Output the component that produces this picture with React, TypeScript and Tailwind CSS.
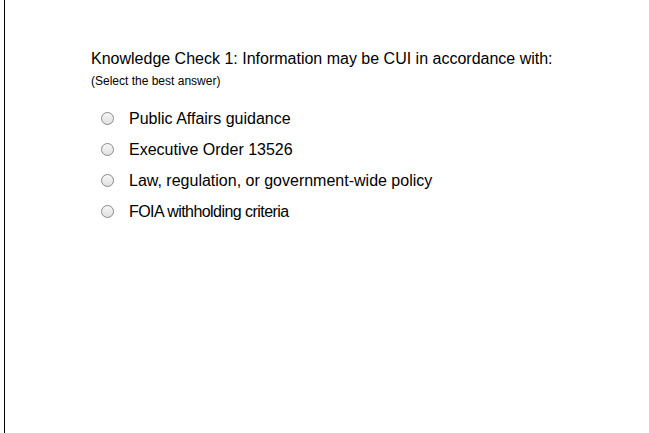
const options = [
  { label: "Public Affairs guidance", tight: false },
  { label: "Executive Order 13526", tight: false },
  { label: "Law, regulation, or government-wide policy", tight: false },
  { label: "FOIA withholding criteria", tight: true },
];

function Radio() {
  return (
    <span className="block w-[13px] h-[13px] rounded-full border border-[#8a8a8a] bg-gradient-to-b from-[#f7f7f7] to-[#e0e0e0] shrink-0" />
  );
}

export default function App() {
  return (
    <div className="w-[649px] h-[433px] bg-white flex font-['Liberation_Sans',Arial,sans-serif] text-black">
      <div className="w-[4px]" />
      <div className="w-px bg-black" />
      <div className="flex-1 pl-[86px] pt-[49px]">
        <h1 className="text-[16px] leading-[20px]">
          Knowledge Check 1: Information may be CUI in accordance with:
        </h1>
        <p className="text-[12px] leading-[14px] mt-[5px]">(Select the best answer)</p>
        <ul className="mt-[15px] flex flex-col">
          {options.map((o) => (
            <li key={o.label} className="flex items-center h-[31px] pl-[10px]">
              <Radio />
              <span className={o.tight ? "ml-[15px] text-[16px] tracking-[-0.55px]" : "ml-[15px] text-[16px]"}>
                {o.label}
              </span>
            </li>
          ))}
        </ul>
      </div>
    </div>
  );
}
